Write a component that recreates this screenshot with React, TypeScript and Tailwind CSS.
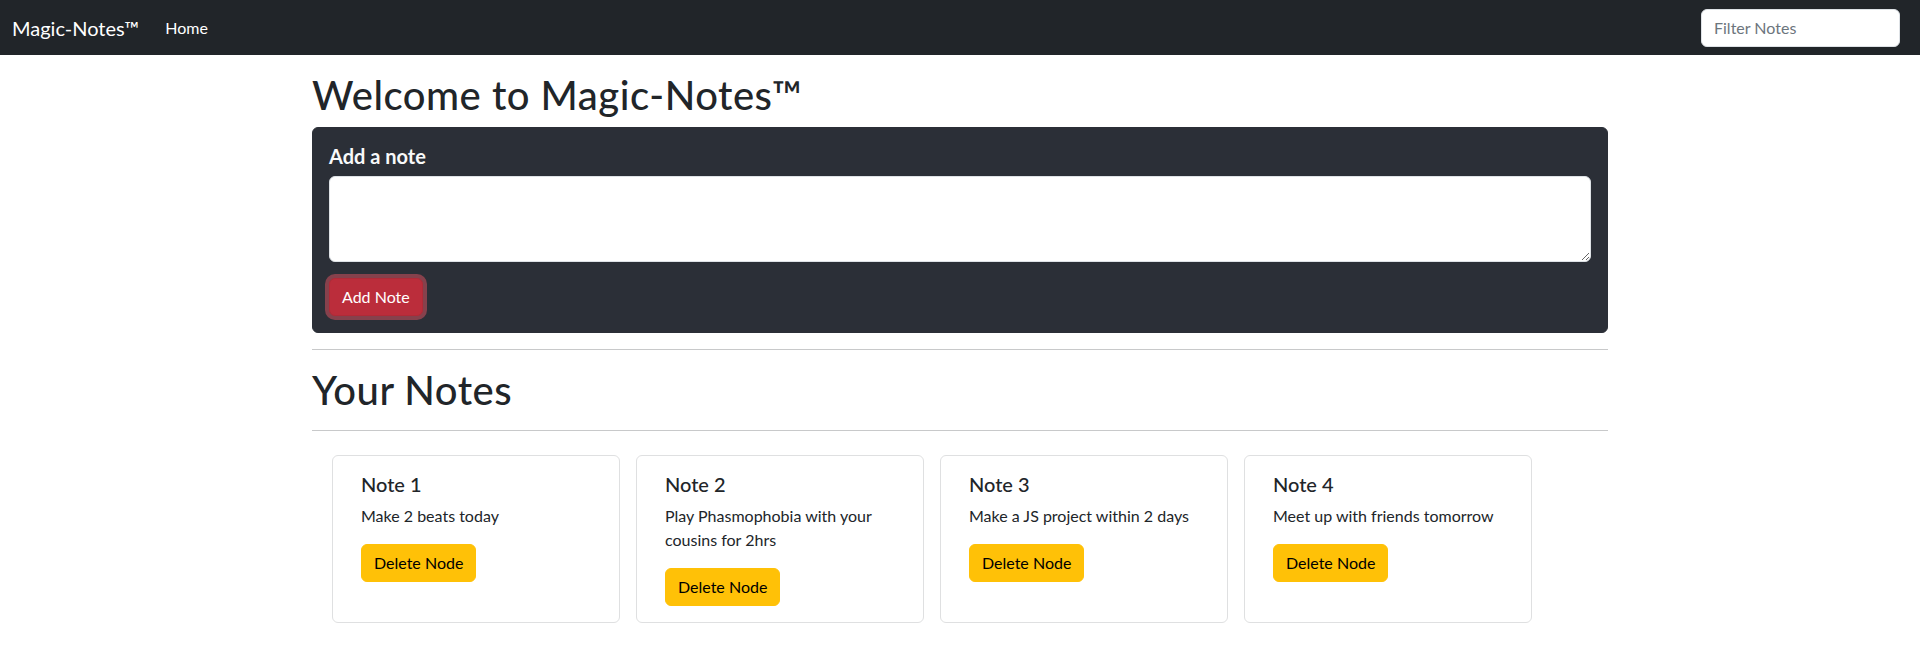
import React, { useState } from 'react';

interface Note {
  title: string;
  text: string;
}

const initialNotes: Note[] = [
  { title: 'Note 1', text: 'Make 2 beats today' },
  { title: 'Note 2', text: 'Play Phasmophobia with your cousins for 2hrs' },
  { title: 'Note 3', text: 'Make a JS project within 2 days' },
  { title: 'Note 4', text: 'Meet up with friends tomorrow' },
];

const App: React.FC = () => {
  const [notes, setNotes] = useState<Note[]>(initialNotes);
  const [draft, setDraft] = useState('');
  const [filter, setFilter] = useState('');

  const addNote = () => {
    if (!draft.trim()) return;
    setNotes([...notes, { title: `Note ${notes.length + 1}`, text: draft }]);
    setDraft('');
  };

  const deleteNote = (idx: number) => {
    setNotes(notes.filter((_, i) => i !== idx));
  };

  const visible = notes.filter(n => n.text.toLowerCase().includes(filter.toLowerCase()));

  return (
    <div className="min-h-screen bg-white text-[#212529] font-['Lato',sans-serif]">
      <nav className="h-[55px] bg-[#212529] flex items-center justify-between px-3">
        <div className="flex items-center">
          <a href="#" className="text-[20px] leading-[30px] text-white mr-[18px]">Magic-Notes™</a>
          <a href="#" className="text-base leading-6 text-white px-2">Home</a>
        </div>
        <input
          type="search"
          value={filter}
          onChange={e => setFilter(e.target.value)}
          placeholder="Filter Notes"
          className="w-[199px] h-[38px] mr-2 rounded-md border border-[#dee2e6] bg-white px-3 text-base text-[#212529] placeholder:text-[#6c757d] outline-none"
        />
      </nav>

      <div className="w-[1296px] mx-auto mt-4">
        <h1 className="text-[40px] leading-[48px] font-medium tracking-[0.5px] mb-2">Welcome to Magic-Notes™</h1>

        <div className="bg-[#2b2f37] border border-[#2b2f37] rounded-md p-4">
          <h5 className="text-[20px] leading-6 font-bold text-[#f8f9fa] mb-2">Add a note</h5>
          <textarea
            rows={3}
            value={draft}
            onChange={e => setDraft(e.target.value)}
            className="block w-full h-[86px] rounded-md border border-[#dee2e6] bg-white px-3 py-1.5 text-base leading-6 text-[#212529] outline-none mb-4"
          />
          <button
            onClick={addNote}
            className="bg-[#bb2d3b] border border-[#b02a37] rounded-md px-3 py-1.5 text-base leading-6 text-white shadow-[0_0_0_4px_rgba(225,83,97,0.5)]"
          >
            Add Note
          </button>
        </div>

        <hr className="my-4 border-[#c8c9ca]" />
        <h1 className="text-[40px] leading-[48px] font-medium tracking-[0.5px] mb-2">Your Notes</h1>
        <hr className="mt-4 border-[#c8c9ca]" />

        <div className="flex gap-4 pl-5 pt-6 pb-2">
          {visible.map((note, idx) => (
            <div key={note.title} className="w-[288px] border border-[#dfe0e1] rounded-md py-4 px-7">
              <h5 className="text-[20px] leading-6 font-medium mb-2">{note.title}</h5>
              <p className="text-base leading-6 mb-4">{note.text}</p>
              <button
                onClick={() => deleteNote(idx)}
                className="bg-[#ffc107] border border-[#ffc107] rounded-md px-3 py-1.5 text-base leading-6 text-black"
              >
                Delete Node
              </button>
            </div>
          ))}
        </div>
      </div>
    </div>
  );
};

export default App;
